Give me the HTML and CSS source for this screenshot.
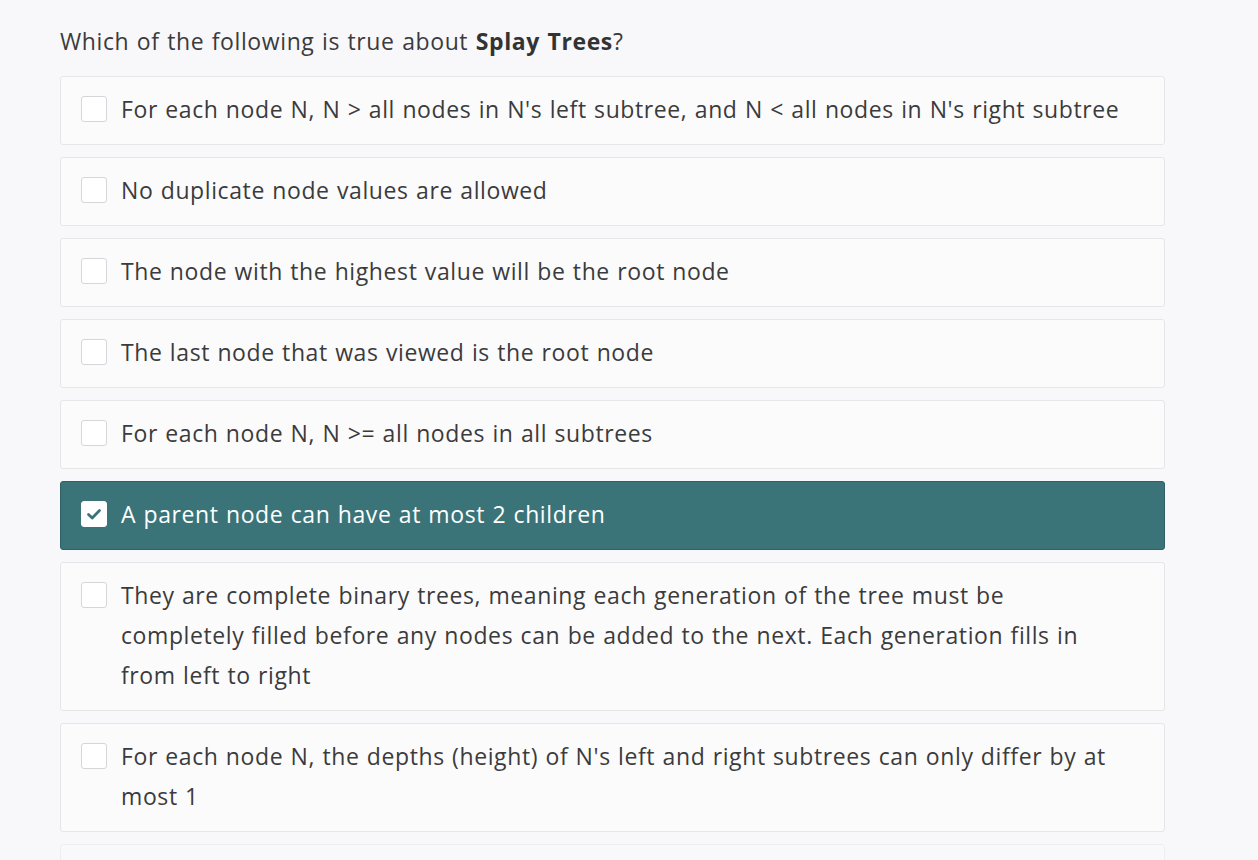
FILE: index.html
```html
<!DOCTYPE html>
<html lang="en">
<head>
    <meta charset="UTF-8">
    <meta name="viewport" content="width=device-width, initial-scale=1.0">
    <title>Splay Trees Quiz</title>
    <link rel="stylesheet" href="styles.css">
</head>
<body>

<div class="quiz">
    <div class="question">Which of the following is true about <b>Splay Trees</b>?</div>

    <div class="options">
        <label class="option"><span class="box"></span><span class="text">For each node N, N &gt; all nodes in N's left subtree, and N &lt; all nodes in N's right subtree</span></label>
        <label class="option"><span class="box"></span><span class="text">No duplicate node values are allowed</span></label>
        <label class="option"><span class="box"></span><span class="text">The node with the highest value will be the root node</span></label>
        <label class="option"><span class="box"></span><span class="text">The last node that was viewed is the root node</span></label>
        <label class="option"><span class="box"></span><span class="text">For each node N, N &gt;= all nodes in all subtrees</span></label>
        <label class="option selected"><span class="box">
            <svg width="18" height="18" viewBox="0 0 18 18"><path d="M3.5 9.5 L7.2 13 L14.5 5.5" fill="none" stroke="#3a7478" stroke-width="2.8" stroke-linecap="round" stroke-linejoin="round"/></svg>
        </span><span class="text">A parent node can have at most 2 children</span></label>
        <label class="option"><span class="box"></span><span class="text">They are complete binary trees, meaning each generation of the tree must be completely filled before any nodes can be added to the next. Each generation fills in from left to right</span></label>
        <label class="option"><span class="box"></span><span class="text">For each node N, the depths (height) of N's left and right subtrees can only differ by at most 1</span></label>
        <label class="option faded"><span class="box"></span><span class="text">&nbsp;</span></label>
    </div>
</div>

</body>
</html>
```

FILE: styles.css
```css
body {
    font-family: "Open Sans", Lato, sans-serif;
    background-color: #f8f8fa;
    margin: 0;
    padding: 0;
    color: #3b3b3d;
    font-size: 23px;
}

.quiz {
    width: 1105px;
    margin-left: 60px;
    padding-top: 26px;
}

.question {
    line-height: 30px;
    margin-bottom: 20px;
    letter-spacing: 0.6px;
    word-spacing: 1px;
}

.question b {
    font-weight: 700;
    color: #333;
}

.options {
    display: flex;
    flex-direction: column;
    gap: 12px;
}

.option {
    display: flex;
    align-items: flex-start;
    background-color: #fbfbfc;
    border: 1px solid #e6e6e9;
    border-radius: 3px;
    padding: 12px 40px 15px 20px;
    line-height: 40px;
    letter-spacing: 0.6px;
    word-spacing: 0.8px;
    cursor: pointer;
}

.option .box {
    flex: none;
    width: 24px;
    height: 24px;
    margin-top: 7px;
    margin-right: 14px;
    background-color: #fff;
    border: 1px solid #d6d6da;
    border-radius: 3px;
    display: flex;
    align-items: center;
    justify-content: center;
}

.option.selected {
    background-color: #3a7478;
    border-color: #2f6064;
    color: #fff;
}

.option.selected .box {
    border-color: #fff;
}

.option.faded {
    opacity: 0.5;
}
```
